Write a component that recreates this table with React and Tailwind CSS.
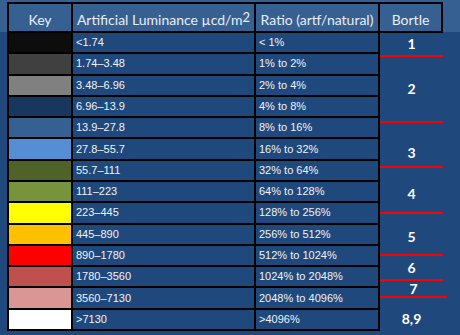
import React from 'react';

const rows = [
  { color: 'bg-[#0d0d0d]', lum: '<1.74', ratio: '< 1%' },
  { color: 'bg-[#404040]', lum: '1.74–3.48', ratio: '1% to 2%' },
  { color: 'bg-[#808080]', lum: '3.48–6.96', ratio: '2% to 4%' },
  { color: 'bg-[#17375e]', lum: '6.96–13.9', ratio: '4% to 8%' },
  { color: 'bg-[#366092]', lum: '13.9–27.8', ratio: '8% to 16%' },
  { color: 'bg-[#558ed5]', lum: '27.8–55.7', ratio: '16% to 32%' },
  { color: 'bg-[#4f6228]', lum: '55.7–111', ratio: '32% to 64%' },
  { color: 'bg-[#77933c]', lum: '111–223', ratio: '64% to 128%' },
  { color: 'bg-[#ffff00]', lum: '223–445', ratio: '128% to 256%' },
  { color: 'bg-[#ffc000]', lum: '445–890', ratio: '256% to 512%' },
  { color: 'bg-[#ff0000]', lum: '890–1780', ratio: '512% to 1024%' },
  { color: 'bg-[#c0504d]', lum: '1780–3560', ratio: '1024% to 2048%' },
  { color: 'bg-[#d99694]', lum: '3560–7130', ratio: '2048% to 4096%' },
  { color: 'bg-[#ffffff]', lum: '>7130', ratio: '>4096%' },
];

// bortle classes, drawn freely next to the table
const bortle = [
  { label: '1', cls: 'h-[24px] pt-0' },
  { label: '2', cls: 'h-[66px] pt-0' },
  { label: '3', cls: 'h-[45px] pt-[17px]' },
  { label: '4', cls: 'h-[46px] pt-[8px]' },
  { label: '5', cls: 'h-[42px] pt-[6px]' },
  { label: '6', cls: 'h-[25px] pt-0' },
  { label: '7', cls: 'h-[17px] pt-0 -mr-[4px]' },
];

const head = "flex items-end justify-center pb-[3px] bg-[#366092] text-[#e9eef5] text-[14px] leading-[17px] font-['Lato',sans-serif]";
const cell = "flex items-center pl-[3px] bg-[#1f497d] text-[#f2f2f2] text-[11px] leading-none font-['Liberation_Sans',Arial,sans-serif]";

export default function App() {
  return (
    <div className="w-[460px] h-[335px] overflow-hidden bg-[linear-gradient(#366092_0_32px,#1f497d_32px)]">
      <div className="flex pt-[2px] pl-[7px]">
        {/* Table */}
        <div className="grid grid-cols-[62px_181px_122px] grid-rows-[27px_repeat(14,1fr)] gap-[2px] p-[2px] bg-black h-[329px]">
          <div className={head}>Key</div>
          <div className={head}>
            <span>
              Artificial Luminance µcd/m<sup className="text-[13px] relative -top-[3px]">2</sup>
            </span>
          </div>
          <div className={head}>Ratio (artf/natural)</div>
          {rows.map((r) => (
            <React.Fragment key={r.lum}>
              <div className={r.color} />
              <div className={cell}>{r.lum}</div>
              <div className={cell}>{r.ratio}</div>
            </React.Fragment>
          ))}
        </div>

        {/* Bortle column */}
        <div className="w-[63px] flex flex-col">
          <div className={head + ' h-[31px] border-t-2 border-r-2 border-b-2 border-black'}>Bortle</div>
          {bortle.map((b) => (
            <div
              key={b.label}
              className={`flex items-center justify-center border-b-2 border-[#ff0000] text-white text-[14px] font-bold leading-none font-['Lato',sans-serif] ${b.cls}`}
            >
              {b.label}
            </div>
          ))}
          <div className="h-[33px] pt-[9px] flex items-center justify-center text-white text-[14px] font-bold leading-none font-['Lato',sans-serif]">
            8,9
          </div>
        </div>
      </div>
    </div>
  );
}
